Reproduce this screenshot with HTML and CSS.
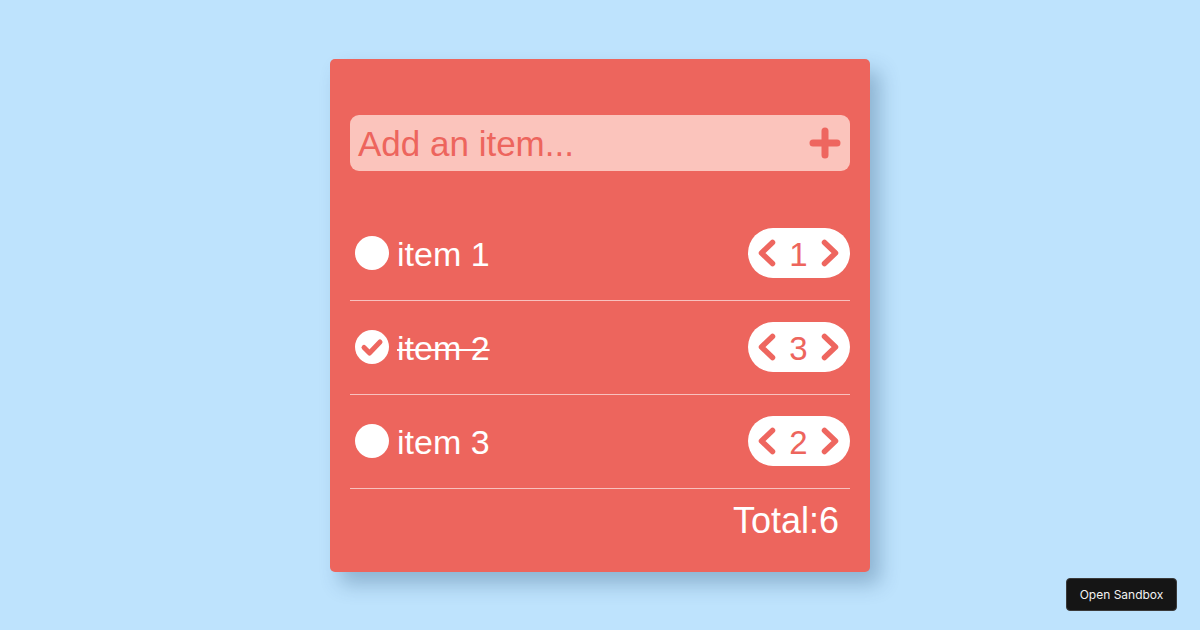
FILE: index.html
```html
<!DOCTYPE html>
<html>
<head>
<meta charset="utf-8">
<link rel="stylesheet" href="styles.css">
</head>
<body>
<div class="page">
  <div class="card">
    <div class="add">
      <span class="placeholder">Add an item...</span>
      <svg class="plus" width="32" height="32" viewBox="0 0 32 32"><path d="M16 4 V28 M4 16 H28" stroke="#ee665f" stroke-width="7" stroke-linecap="round" fill="none"/></svg>
    </div>
    <div class="list">
      <div class="row">
        <svg class="check" width="34" height="34" viewBox="0 0 34 34"><circle cx="17" cy="17" r="17" fill="#fff"/></svg>
        <span class="name">item 1</span>
        <div class="qty">
          <svg class="chev" width="20" height="28" viewBox="0 0 20 28"><path d="M15.5 3.5 L4.5 14 L15.5 24.5" stroke="#ee665f" stroke-width="5.5" stroke-linecap="round" stroke-linejoin="round" fill="none"/></svg>
          <span class="num">1</span>
          <svg class="chev" width="20" height="28" viewBox="0 0 20 28"><path d="M4.5 3.5 L15.5 14 L4.5 24.5" stroke="#ee665f" stroke-width="5.5" stroke-linecap="round" stroke-linejoin="round" fill="none"/></svg>
        </div>
      </div>
      <div class="row">
        <svg class="check" width="34" height="34" viewBox="0 0 34 34"><circle cx="17" cy="17" r="17" fill="#fff"/><path d="M9 17.5 L14.5 23 L25 12" stroke="#ee665f" stroke-width="5" stroke-linecap="round" stroke-linejoin="round" fill="none"/></svg>
        <span class="name done">item 2</span>
        <div class="qty">
          <svg class="chev" width="20" height="28" viewBox="0 0 20 28"><path d="M15.5 3.5 L4.5 14 L15.5 24.5" stroke="#ee665f" stroke-width="5.5" stroke-linecap="round" stroke-linejoin="round" fill="none"/></svg>
          <span class="num">3</span>
          <svg class="chev" width="20" height="28" viewBox="0 0 20 28"><path d="M4.5 3.5 L15.5 14 L4.5 24.5" stroke="#ee665f" stroke-width="5.5" stroke-linecap="round" stroke-linejoin="round" fill="none"/></svg>
        </div>
      </div>
      <div class="row">
        <svg class="check" width="34" height="34" viewBox="0 0 34 34"><circle cx="17" cy="17" r="17" fill="#fff"/></svg>
        <span class="name">item 3</span>
        <div class="qty">
          <svg class="chev" width="20" height="28" viewBox="0 0 20 28"><path d="M15.5 3.5 L4.5 14 L15.5 24.5" stroke="#ee665f" stroke-width="5.5" stroke-linecap="round" stroke-linejoin="round" fill="none"/></svg>
          <span class="num">2</span>
          <svg class="chev" width="20" height="28" viewBox="0 0 20 28"><path d="M4.5 3.5 L15.5 14 L4.5 24.5" stroke="#ee665f" stroke-width="5.5" stroke-linecap="round" stroke-linejoin="round" fill="none"/></svg>
        </div>
      </div>
    </div>
    <div class="total">Total:6</div>
  </div>
  <a class="sandbox">Open Sandbox</a>
</div>
</body>
</html>
```

FILE: styles.css
```css
html, body {
  margin: 0;
  padding: 0;
}
body {
  background: #bee3fd;
  font-family: "Liberation Sans", Arial, sans-serif;
}
.page {
  width: 1200px;
  height: 630px;
  display: flex;
  align-items: center;
  justify-content: center;
  position: relative;
}
.card {
  width: 500px;
  background: #ed655d;
  border-radius: 5px;
  padding: 56px 20px 33px;
  box-shadow: 10px 12px 20px rgba(30, 70, 110, 0.3);
}
.add {
  height: 56px;
  background: #fbc4bc;
  border-radius: 9px;
  display: flex;
  align-items: center;
  padding: 0 9px 0 8px;
}
.placeholder {
  flex: 1;
  color: #ed655d;
  font-size: 35px;
  line-height: 1;
  padding-top: 2px;
}
.plus {
  display: block;
}
.list {
  margin-top: 36px;
}
.row {
  height: 93px;
  border-bottom: 1px solid rgba(255, 255, 255, 0.6);
  display: flex;
  align-items: center;
  padding-left: 5px;
}
.check {
  display: block;
  flex: none;
}
.name {
  margin-left: 8px;
  color: #fff;
  font-size: 34px;
  line-height: 1;
  padding-top: 2px;
}
.done {
  text-decoration: line-through;
  text-decoration-thickness: 2px;
}
.qty {
  margin-left: auto;
  width: 102px;
  height: 50px;
  border-radius: 25px;
  background: #fff;
  display: flex;
  align-items: center;
  justify-content: space-between;
  padding: 0 10px 0 9px;
  box-sizing: border-box;
}
.chev {
  display: block;
}
.num {
  color: #ed655d;
  font-size: 33px;
  line-height: 1;
  padding-top: 2px;
}
.total {
  text-align: right;
  color: #fff;
  font-size: 36px;
  line-height: 36px;
  padding: 14px 11px 0 0;
}
.sandbox {
  position: absolute;
  right: 23px;
  bottom: 19px;
  width: 111px;
  height: 33px;
  box-sizing: border-box;
  background: #151515;
  border: 1px solid #3a3a3a;
  border-radius: 4px;
  color: #f2f2f2;
  font-family: Inter, "Noto Sans", sans-serif;
  font-size: 12px;
  display: flex;
  align-items: center;
  justify-content: center;
}
```
